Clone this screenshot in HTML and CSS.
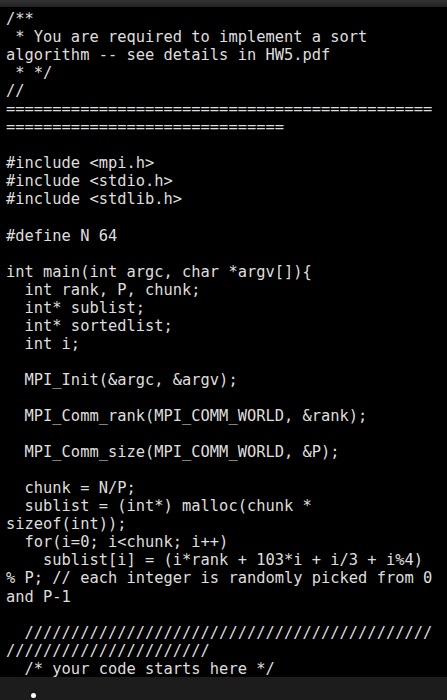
FILE: index.html
```html
<!DOCTYPE html>
<html lang="en">
<head>
  <meta charset="UTF-8" />
  <meta name="viewport" content="width=device-width, initial-scale=1.0" />
  <title>HW5 sort</title>
  <link rel="stylesheet" href="styles.css">
</head>
<body>
  <div class="top-bar"></div>

  <pre class="code">/**
 * You are required to implement a sort
algorithm -- see details in HW5.pdf
 * */
//
==============================================
==============================

#include &lt;mpi.h&gt;
#include &lt;stdio.h&gt;
#include &lt;stdlib.h&gt;

#define N 64

int main(int argc, char *argv[]){
  int rank, P, chunk;
  int* sublist;
  int* sortedlist;
  int i;

  MPI_Init(&amp;argc, &amp;argv);

  MPI_Comm_rank(MPI_COMM_WORLD, &amp;rank);

  MPI_Comm_size(MPI_COMM_WORLD, &amp;P);

  chunk = N/P;
  sublist = (int*) malloc(chunk *
sizeof(int));
  for(i=0; i&lt;chunk; i++)
    sublist[i] = (i*rank + 103*i + i/3 + i%4)
% P; // each integer is randomly picked from 0
and P-1

  ////////////////////////////////////////////
//////////////////////
  /* your code starts here */</pre>

  <!-- bottom toolbar -->
  <div class="bottom-bar">
    <span class="handle"></span>
  </div>
</body>
</html>
```

FILE: styles.css
```css
body {
  margin: 0;
  background: #000;
  height: 700px;
  display: flex;
  flex-direction: column;
  overflow: hidden;
}

.top-bar {
  height: 7px;
  background: linear-gradient(#333, #222);
}

.code {
  flex: 1;
  margin: 0;
  padding: 3px 0 0 6px;
  font-family: "DejaVu Sans Mono", monospace;
  font-size: 15.4px;
  line-height: 18.05px;
  color: #dedede;
  white-space: pre;
  overflow: hidden;
}

.bottom-bar {
  height: 23px;
  background: #1c1c1c;
  position: relative;
}

.handle {
  position: absolute;
  left: 31px;
  top: 16px;
  width: 5px;
  height: 5px;
  border-radius: 50%;
  background: #fff;
}
```
